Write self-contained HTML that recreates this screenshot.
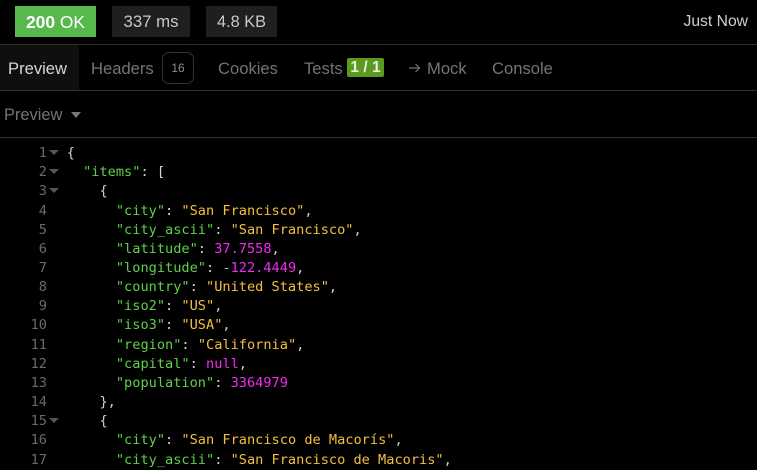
<!DOCTYPE html>
<html><head><meta charset="utf-8">
<style>
html,body{margin:0;padding:0;background:#000;}
body{width:757px;height:470px;position:relative;overflow:hidden;font-family:"Liberation Sans",sans-serif;color:#ccc;}
.a{position:absolute;white-space:nowrap;}
.hr{position:absolute;left:0;width:757px;height:1px;background:#2e2e2e;}
.tag{position:absolute;top:6px;height:31px;line-height:32px;background:#1f1f1f;color:#c8c8c8;font-size:16.3px;text-align:center;white-space:nowrap;}
.tab{position:absolute;top:45px;height:45px;line-height:48px;font-size:16.6px;color:#747474;white-space:nowrap;}
.ln{position:absolute;left:0;width:47px;text-align:right;height:19px;color:#6a6a6a;font:13.62px/19px "DejaVu Sans Mono",monospace;}
.c{position:absolute;left:66.7px;height:19px;white-space:pre;color:#d0d0d0;font:13.62px/19px "DejaVu Sans Mono",monospace;}
.k{color:#5fd04a;}.s{color:#f4bf3f;}.n{color:#f02cf0;}.m{color:#bbb;}
.f{position:absolute;left:49px;width:0;height:0;border-left:5px solid transparent;border-right:5px solid transparent;border-top:5px solid #555;}
</style></head><body>
<div class="tag" style="left:15px;width:81px;background:#57b84c;color:#fff;font-size:17.4px;"><b>200</b> OK</div>
<div class="tag" style="left:112px;width:78px;font-size:16.8px;">337 ms</div>
<div class="tag" style="left:206px;width:71px;">4.8 KB</div>
<div class="a" style="right:9px;top:12px;line-height:19px;font-size:15.7px;color:#d0d0d0;">Just Now</div>
<div class="hr" style="top:44px"></div>
<div class="a" style="left:0;top:45px;width:79px;height:45px;background:#0f0f0f;"></div>
<div class="tab" style="left:8px;color:#d6d6d6;">Preview</div>
<div class="tab" style="left:91px;">Headers</div>
<div class="a" style="left:162px;top:52px;width:30px;height:30px;border:1px solid #333;border-radius:7px;text-align:center;line-height:30px;font-size:12px;color:#8a8a8a;">16</div>
<div class="tab" style="left:218px;">Cookies</div>
<div class="tab" style="left:304px;">Tests</div>
<div class="a" style="left:347px;top:58px;width:37px;height:19px;background:#5a9a1e;border-radius:2px;text-align:center;line-height:20px;font-size:15.5px;font-weight:bold;color:#e8f0e0;">1 / 1</div>
<svg class="a" style="left:408px;top:62px" width="13" height="12" viewBox="0 0 13 12"><path d="M1 6H11.5M7.5 2L11.5 6L7.5 10" fill="none" stroke="#747474" stroke-width="1.2"/></svg>
<div class="tab" style="left:427px;">Mock</div>
<div class="tab" style="left:492px;">Console</div>
<div class="hr" style="top:90px"></div>
<div class="a" style="left:4px;top:105px;line-height:20px;font-size:16.4px;color:#747474;">Preview</div>
<div class="a" style="left:71px;top:112px;width:0;height:0;border-left:5px solid transparent;border-right:5px solid transparent;border-top:6px solid #777;"></div>
<div class="hr" style="top:137px"></div>

<div class="ln" style="top:144px">1</div><div class="f" style="top:150px"></div>
<div class="c" style="top:144px">{</div>
<div class="ln" style="top:163px">2</div><div class="f" style="top:169px"></div>
<div class="c" style="top:163px">  <span class="k">"items"</span>: [</div>
<div class="ln" style="top:182px">3</div><div class="f" style="top:188px"></div>
<div class="c" style="top:182px">    {</div>
<div class="ln" style="top:202px">4</div>
<div class="c" style="top:202px">      <span class="k">"city"</span>: <span class="s">"San Francisco"</span>,</div>
<div class="ln" style="top:221px">5</div>
<div class="c" style="top:221px">      <span class="k">"city_ascii"</span>: <span class="s">"San Francisco"</span>,</div>
<div class="ln" style="top:240px">6</div>
<div class="c" style="top:240px">      <span class="k">"latitude"</span>: <span class="n">37.7558</span>,</div>
<div class="ln" style="top:259px">7</div>
<div class="c" style="top:259px">      <span class="k">"longitude"</span>: <span class="m">-</span><span class="n">122.4449</span>,</div>
<div class="ln" style="top:278px">8</div>
<div class="c" style="top:278px">      <span class="k">"country"</span>: <span class="s">"United States"</span>,</div>
<div class="ln" style="top:297px">9</div>
<div class="c" style="top:297px">      <span class="k">"iso2"</span>: <span class="s">"US"</span>,</div>
<div class="ln" style="top:316px">10</div>
<div class="c" style="top:316px">      <span class="k">"iso3"</span>: <span class="s">"USA"</span>,</div>
<div class="ln" style="top:336px">11</div>
<div class="c" style="top:336px">      <span class="k">"region"</span>: <span class="s">"California"</span>,</div>
<div class="ln" style="top:355px">12</div>
<div class="c" style="top:355px">      <span class="k">"capital"</span>: <span class="n">null</span>,</div>
<div class="ln" style="top:374px">13</div>
<div class="c" style="top:374px">      <span class="k">"population"</span>: <span class="n">3364979</span></div>
<div class="ln" style="top:393px">14</div>
<div class="c" style="top:393px">    },</div>
<div class="ln" style="top:412px">15</div><div class="f" style="top:418px"></div>
<div class="c" style="top:412px">    {</div>
<div class="ln" style="top:431px">16</div>
<div class="c" style="top:431px">      <span class="k">"city"</span>: <span class="s">"San Francisco de Macorís"</span>,</div>
<div class="ln" style="top:451px">17</div>
<div class="c" style="top:451px">      <span class="k">"city_ascii"</span>: <span class="s">"San Francisco de Macoris"</span>,</div>
</body></html>
